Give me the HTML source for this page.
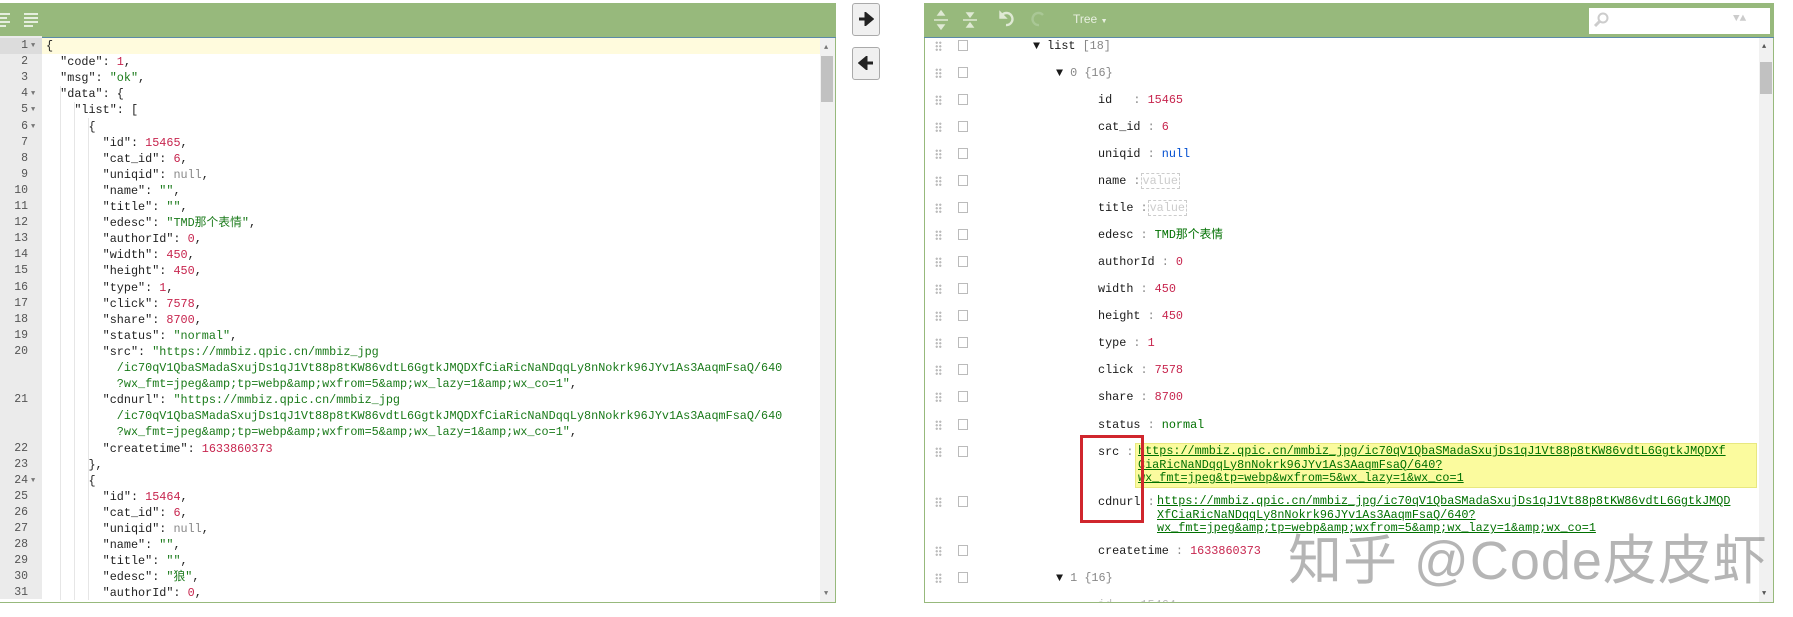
<!DOCTYPE html>
<html><head><meta charset="utf-8"><style>
*{margin:0;padding:0;box-sizing:border-box}
body{width:1793px;height:617px;background:#fff;position:relative;overflow:hidden;font-family:"Liberation Mono","Noto Sans CJK SC",monospace}
.abs{position:absolute}
.tb{background:#97b97c;border-bottom:1px solid #5c8aa8}
#left{left:0;top:3px;width:836px;height:600px;border:1px solid #97b97c;border-left:none}
#gut{left:0;top:36px;width:42px;height:563px;background:#ebebeb}
.ln{position:absolute;left:0;width:28px;text-align:right;font-size:11.5px;color:#555;height:16px;line-height:16px}
.fd{position:absolute;left:31px;font-size:7px;color:#777;line-height:16px}
.cl{position:absolute;left:46px;font-size:11.8px;line-height:16px;white-space:pre;color:#222}
.s{color:#1a7a1a}.n{color:#c7254e}.nl{color:#888}.p{color:#999}
#right{left:924px;top:3px;width:850px;height:600px;border:1px solid #97b97c}
.row{position:absolute;font-size:11.8px;line-height:14px;white-space:pre;color:#1a1a1a}
.h{position:absolute;left:935px;width:7px;height:10px;background:radial-gradient(circle,#bbb 1px,transparent 1.3px) 0 0/3.5px 3.5px}
.cb{position:absolute;left:958px;width:10px;height:11px;border:1px solid #bbb}
.c{color:#888}.tn{color:#c7254e}.ts{color:#007000}.tnull{color:#004ed0}
.u{text-decoration:underline;color:#007000}
.ph{border:1px dashed #ccc;color:#ccc;padding:0 1px}
.btn{position:absolute;left:852px;width:28px;height:33px;border:1px solid #aaa;border-radius:3px;background:#f0f0f0}
</style></head><body>
<div class="abs" id="left"></div>
<div class="abs tb" style="left:0;top:3px;width:836px;height:35px"></div>
<svg class="abs" style="left:0;top:12px" width="40" height="16"><g stroke="#fff" stroke-width="1.6"><path d="M0 2h10M0 6h7M0 10h10M0 14h6"/><path d="M24 2h14M24 6h14M24 10h14M24 14h9"/></g></svg>
<div class="abs" id="gut"></div>
<div class="abs" style="left:0;top:38px;width:42px;height:16px;background:#dcdcdc"></div>
<div class="abs" style="left:42px;top:38px;width:778px;height:16px;background:#fffbdd"></div>
<div class="abs" style="left:820px;top:38px;width:15px;height:564px;background:#f1f1f1"></div>
<div class="abs" style="left:821px;top:56px;width:12px;height:46px;background:#c1c1c1"></div>
<div class="abs" style="left:824px;top:44px;font-size:7px;color:#777">▲</div>
<div class="abs" style="left:824px;top:590px;font-size:7px;color:#777">▼</div>
<div id="code"></div>
<div class="btn" style="top:3px"></div><div class="btn" style="top:47px"></div>
<svg class="abs" style="left:858px;top:12px" width="16" height="14"><path d="M1 7h9M8 2l6 5-6 5z" stroke="#222" stroke-width="3" fill="#222"/></svg>
<svg class="abs" style="left:858px;top:56px" width="16" height="14"><path d="M15 7H6M8 2L2 7l6 5z" stroke="#222" stroke-width="3" fill="#222"/></svg>
<div class="abs" id="right"></div>
<div class="abs tb" style="left:924px;top:3px;width:850px;height:35px"></div>
<svg class="abs" style="left:934px;top:10px" width="120" height="20"><g stroke="#dfe9d4" fill="#dfe9d4" stroke-width="1.4"><path d="M0 10h14M7 1l-3 4h6zM7 19l-3-4h6z"/><path d="M29 10h14M36 7l-3-4h6zM36 13l-3 4h6z"/><path d="M72 15a6 6 0 1 0-4-10" fill="none" stroke-width="2.4"/><path d="M66 2v6h6z"/></g><path d="M105 15a6 6 0 1 1 4-10" fill="none" stroke="#a9c795" stroke-width="2.4"/></svg>
<div class="abs" style="left:1073px;top:12px;font:12px 'Liberation Sans',sans-serif;color:#e8f0e0">Tree <span style="font-size:7px">▼</span></div>
<div class="abs" style="left:1589px;top:8px;width:181px;height:26px;background:#fff"></div>
<svg class="abs" style="left:1593px;top:12px" width="16" height="16"><circle cx="10" cy="6" r="4.5" stroke="#ccc" stroke-width="2" fill="none"/><path d="M7 9l-5 5" stroke="#ccc" stroke-width="3"/></svg>
<div class="abs" style="left:1733px;top:13px;font-size:11px;color:#ccc">▼▲</div>
<div class="abs" style="left:1759px;top:38px;width:14px;height:564px;background:#f1f1f1"></div>
<div class="abs" style="left:1760px;top:62px;width:12px;height:32px;background:#c1c1c1"></div>
<div class="abs" style="left:1762px;top:43px;font-size:7px;color:#555">▲</div>
<div class="abs" style="left:1762px;top:590px;font-size:7px;color:#555">▼</div>
<div id="tree"></div>
<div class="abs" style="left:1135px;top:443px;width:622px;height:45px;background:#fbfb9e;border:1px solid #e8e880"></div>
<div class="row" style="left:1098px;top:445px">src <span class="c">:</span></div>
<div class="row u" style="left:1138px;top:445px;line-height:13.6px">https://mmbiz.qpic.cn/mmbiz_jpg/ic70qV1QbaSMadaSxujDs1qJ1Vt88p8tKW86vdtL6GgtkJMQDXf
CiaRicNaNDqqLy8nNokrk96JYv1As3AaqmFsaQ/640?
wx_fmt=jpeg&amp;tp=webp&amp;wxfrom=5&amp;wx_lazy=1&amp;wx_co=1</div>
<div class="row" style="left:1098px;top:495px">cdnurl <span class="c">:</span></div>
<div class="row u" style="left:1157px;top:495px;line-height:13.6px">https://mmbiz.qpic.cn/mmbiz_jpg/ic70qV1QbaSMadaSxujDs1qJ1Vt88p8tKW86vdtL6GgtkJMQD
XfCiaRicNaNDqqLy8nNokrk96JYv1As3AaqmFsaQ/640?
wx_fmt=jpeg&amp;amp;tp=webp&amp;amp;wxfrom=5&amp;amp;wx_lazy=1&amp;amp;wx_co=1</div>
<div class="abs" style="left:1080px;top:435px;width:64px;height:88px;border:3px solid #d0262d"></div>
<div class="abs" style="left:1288px;top:516px;font:54px 'Liberation Sans','Noto Sans CJK SC',sans-serif;color:rgba(120,120,120,0.55);white-space:nowrap;letter-spacing:1px">知乎 @Code皮皮虾</div>
<script>
const L=[
[1,'{',1],[2,'  "code": <n>1</n>,'],[3,'  "msg": <s>"ok"</s>,'],[4,'  "data": {',1],[5,'    "list": [',1],[6,'      {',1],
[7,'        "id": <n>15465</n>,'],[8,'        "cat_id": <n>6</n>,'],[9,'        "uniqid": <l>null</l>,'],[10,'        "name": <s>""</s>,'],[11,'        "title": <s>""</s>,'],
[12,'        "edesc": <s>"TMD那个表情"</s>,'],[13,'        "authorId": <n>0</n>,'],[14,'        "width": <n>450</n>,'],[15,'        "height": <n>450</n>,'],[16,'        "type": <n>1</n>,'],
[17,'        "click": <n>7578</n>,'],[18,'        "share": <n>8700</n>,'],[19,'        "status": <s>"normal"</s>,'],
[20,'        "src": <s>"https://mmbiz.qpic.cn/mmbiz_jpg</s>'],[0,'          <s>/ic70qV1QbaSMadaSxujDs1qJ1Vt88p8tKW86vdtL6GgtkJMQDXfCiaRicNaNDqqLy8nNokrk96JYv1As3AaqmFsaQ/640</s>'],[0,'          <s>?wx_fmt=jpeg&amp;amp;tp=webp&amp;amp;wxfrom=5&amp;amp;wx_lazy=1&amp;amp;wx_co=1"</s>,'],
[21,'        "cdnurl": <s>"https://mmbiz.qpic.cn/mmbiz_jpg</s>'],[0,'          <s>/ic70qV1QbaSMadaSxujDs1qJ1Vt88p8tKW86vdtL6GgtkJMQDXfCiaRicNaNDqqLy8nNokrk96JYv1As3AaqmFsaQ/640</s>'],[0,'          <s>?wx_fmt=jpeg&amp;amp;tp=webp&amp;amp;wxfrom=5&amp;amp;wx_lazy=1&amp;amp;wx_co=1"</s>,'],
[22,'        "createtime": <n>1633860373</n>'],[23,'      },'],[24,'      {',1],[25,'        "id": <n>15464</n>,'],[26,'        "cat_id": <n>6</n>,'],[27,'        "uniqid": <l>null</l>,'],
[28,'        "name": <s>""</s>,'],[29,'        "title": <s>""</s>,'],[30,'        "edesc": <s>"狼"</s>,'],[31,'        "authorId": <n>0</n>,']];
let h='';
[[60,86],[74,102],[88,118]].forEach(([x,st])=>{h+=`<div class="abs" style="left:${x}px;top:${st}px;width:1px;height:${600-st}px;background:#e6e6e6"></div>`;});
L.forEach((r,i)=>{const y=38+i*16.1;
if(r[0])h+=`<div class="ln" style="top:${y}px">${r[0]}</div>`;
if(r[2])h+=`<div class="fd" style="top:${y}px">▼</div>`;
let t=r[1].replace(/<n>/g,'<span class="n">').replace(/<s>/g,'<span class="s">').replace(/<l>/g,'<span class="nl">').replace(/<\/[nsl]>/g,'</span>');
h+=`<div class="cl" style="top:${y}px">${t}</div>`;});
document.getElementById('code').innerHTML=h;
const T=[[46,1033,'▼ list <span class="c">[18]</span>'],[73,1056,'▼ <span class="c">0 {16}</span>'],
[100,1098,'id   <span class="c">:</span> <span class="tn">15465</span>'],[127,1098,'cat_id <span class="c">:</span> <span class="tn">6</span>'],[154,1098,'uniqid <span class="c">:</span> <span class="tnull">null</span>'],
[181,1098,'name <span class="c">:</span><span class="ph">value</span>'],[208,1098,'title <span class="c">:</span><span class="ph">value</span>'],[235,1098,'edesc <span class="c">:</span> <span class="ts">TMD那个表情</span>'],
[262,1098,'authorId <span class="c">:</span> <span class="tn">0</span>'],[289,1098,'width <span class="c">:</span> <span class="tn">450</span>'],[316,1098,'height <span class="c">:</span> <span class="tn">450</span>'],
[343,1098,'type <span class="c">:</span> <span class="tn">1</span>'],[370,1098,'click <span class="c">:</span> <span class="tn">7578</span>'],[397,1098,'share <span class="c">:</span> <span class="tn">8700</span>'],
[425,1098,'status <span class="c">:</span> <span class="ts">normal</span>'],[452,0,''],[502,0,''],[551,1098,'createtime <span class="c">:</span> <span class="tn">1633860373</span>'],
[578,1056,'▼ <span class="c">1 {16}</span>'],[605,1098,'<span style="color:#bbb">id    15464</span>']];
let g='';T.forEach(r=>{const y=r[0];if(y<600){g+=`<div class="h" style="top:${y-5}px"></div><div class="cb" style="top:${y-6}px"></div>`;}
if(r[2])g+=`<div class="row" style="left:${r[1]}px;top:${y-7}px">${r[2]}</div>`;});
document.getElementById('tree').innerHTML=g;
</script>
<div class="abs" style="left:925px;top:602px;width:850px;height:15px;background:#fff"></div>
<div class="abs" style="left:924px;top:602px;width:850px;height:1px;background:#97b97c"></div>
</body></html>
